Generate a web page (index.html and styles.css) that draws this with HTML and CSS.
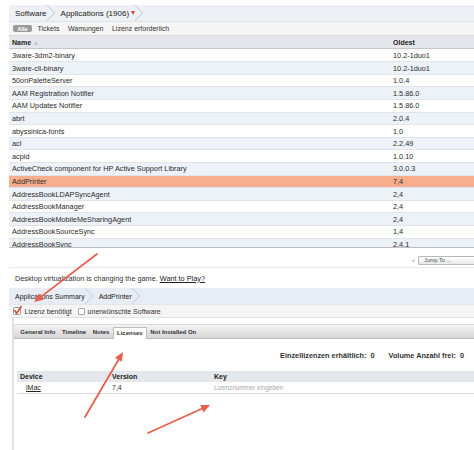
FILE: index.html
```html
<!DOCTYPE html>
<html>
<head>
<meta charset="utf-8">
<title>Applications</title>
<link rel="stylesheet" href="styles.css">
</head>
<body>
<div class="page">
  <div class="crumbs">
    <span class="crumb">Software</span>
    <span class="crumb">Applications (1906)<span class="caret"></span></span>
  </div>
  <div class="filters">
    <span class="pill">Alle</span>
    <span class="filter">Tickets</span>
    <span class="filter">Wamungen</span>
    <span class="filter">Lizenz erforderlich</span>
  </div>
  <div class="grid">
    <div class="ghead"><span>Name<i class="sort"></i></span><span>Oldest</span></div>
    <div class="gbody">
      <div class="row"><span>3ware-3dm2-binary</span><span>10.2-1duo1</span></div>
      <div class="row alt"><span>3ware-cli-binary</span><span>10.2-1duo1</span></div>
      <div class="row"><span>50onPaletteServer</span><span>1.0.4</span></div>
      <div class="row alt"><span>AAM Registration Notifier</span><span>1.5.86.0</span></div>
      <div class="row"><span>AAM Updates Notifier</span><span>1.5.86.0</span></div>
      <div class="row alt"><span>abrt</span><span>2.0.4</span></div>
      <div class="row"><span>abyssinica-fonts</span><span>1.0</span></div>
      <div class="row alt"><span>acl</span><span>2.2.49</span></div>
      <div class="row"><span>acpid</span><span>1.0.10</span></div>
      <div class="row alt"><span>ActiveCheck component for HP Active Support Library</span><span>3.0.0.3</span></div>
      <div class="row sel"><span>AddPrinter</span><span>7,4</span></div>
      <div class="row alt"><span>AddressBookLDAPSyncAgent</span><span>2,4</span></div>
      <div class="row"><span>AddressBookManager</span><span>2,4</span></div>
      <div class="row alt"><span>AddressBookMobileMeSharingAgent</span><span>2,4</span></div>
      <div class="row"><span>AddressBookSourceSync</span><span>1,4</span></div>
      <div class="row alt"><span>AddressBookSync</span><span>2.4.1</span></div>
    </div>
  </div>
  <div class="pager"><span class="laquo">«</span><span class="jump">Jump To ...</span></div>
  <div class="msg">Desktop virtualization is changing the game. <a class="link">Want to Play?</a></div>
  <div class="crumbs sub">
    <span class="crumb">Applications Summary</span>
    <span class="crumb">AddPrinter</span>
  </div>
  <div class="checks">
    <span class="cb on"><svg width="9" height="9" viewBox="0 0 9 9"><rect x="0.5" y="1.5" width="7" height="7" rx="1" fill="#fff" stroke="#9a9a9a"/><path d="M1.8 4.6 L3.6 7.2 L8.2 0.6" fill="none" stroke="#d8432a" stroke-width="1.6" stroke-linecap="round" stroke-linejoin="round"/></svg></span>
    <span class="lbl">Lizenz benötigt</span>
    <span class="cb off"></span>
    <span class="lbl">unerwünschte Software</span>
  </div>
  <div class="panel">
    <div class="tabs">
      <span class="tab">General Info</span>
      <span class="tab">Timeline</span>
      <span class="tab">Notes</span>
      <span class="tab active">Licenses</span>
      <span class="tab">Not Installed On</span>
    </div>
    <div class="stats">
      <span>Einzellizenzen erhältlich:&nbsp; 0</span>
      <span>Volume Anzahl frei:&nbsp; 0</span>
    </div>
    <div class="dtable">
      <div class="dhead"><span>Device</span><span>Version</span><span>Key</span></div>
      <div class="drow"><span><a class="dev">iMac</a></span><span>7,4</span><span class="ph">Lizenznummer eingeben</span></div>
    </div>
  </div>
</div>
<svg class="arrows" width="474" height="450" viewBox="0 0 474 450">
  <g stroke="#e8604d" stroke-width="1.8" stroke-linecap="round" fill="#e8604d">
    <line x1="97" y1="254" x2="41.2" y2="296.6"/>
    <polygon stroke="none" points="34,302 43.6,299.7 38.7,293.4"/>
    <line x1="85" y1="417" x2="118.5" y2="359.8"/>
    <polygon stroke="none" points="123,352 121.9,361.8 115,357.8"/>
    <line x1="148" y1="433" x2="201.8" y2="408.7"/>
    <polygon stroke="none" points="210,405 203.5,412.4 200.2,405.1"/>
  </g>
</svg>
</body>
</html>
```

FILE: styles.css
```css
* { box-sizing: border-box; }
html, body { margin: 0; padding: 0; background: #fff; }
body {
  width: 474px;
  height: 450px;
  overflow: hidden;
  position: relative;
  font-family: "Liberation Sans", Arial, sans-serif;
  color: #2b2b2b;
}
.page { padding: 5px 0 0 9px; }

/* breadcrumbs */
.crumbs {
  display: flex;
  align-items: center;
  height: 17px;
  background: #edf0f5;
  border-bottom: 1px solid #dfe3e8;
  font-size: 8px;
  color: #222;
  overflow: hidden;
}
.crumb {
  position: relative;
  display: flex;
  align-items: center;
  height: 16px;
  padding: 0 8px 0 6px;
}
.crumb::after {
  content: "";
  position: absolute;
  right: 2px;
  top: 2px;
  width: 11px;
  height: 11px;
  border-top: 1px solid #cfd4db;
  border-right: 1px solid #cfd4db;
  transform: rotate(45deg);
}
.caret {
  display: inline-block;
  margin-left: 2px;
  width: 0;
  height: 0;
  border-left: 2.5px solid transparent;
  border-right: 2.5px solid transparent;
  border-top: 4px solid #e0432c;
}
.crumbs.sub {
  height: 17px;
  background: #e8edf5;
  border-bottom: 1px solid #e3e6ea;
  font-size: 7px;
}

/* filters */
.filters {
  display: flex;
  align-items: center;
  gap: 8.5px;
  height: 14px;
  padding-left: 4px;
  background: #f5f5f5;
  border-bottom: 1px solid #dcdcdc;
  font-size: 7px;
  color: #333;
}
.pill {
  display: flex;
  align-items: center;
  justify-content: center;
  width: 19px;
  height: 7px;
  margin-right: -3px;
  border-radius: 2px;
  background: #9b9b9b;
  color: #fff;
  font-weight: bold;
  font-size: 5.5px;
}

/* grid */
.grid { border-bottom: 1px solid #bdbdbd; }
.ghead, .row {
  display: grid;
  grid-template-columns: 1fr 84px;
  align-items: center;
}
.ghead span, .row span { padding-left: 3px; white-space: nowrap; }
.ghead {
  height: 13px;
  background: #e3e6ea;
  border-bottom: 1px solid #c4c7cb;
  font-weight: bold;
  font-size: 7px;
  color: #222;
}
.sort {
  display: inline-block;
  margin-left: 3px;
  width: 0;
  height: 0;
  border-left: 2.5px solid transparent;
  border-right: 2.5px solid transparent;
  border-bottom: 4px solid #c2c2c2;
}
.gbody { height: 198px; overflow: hidden; }
.row {
  height: 12.6px;
  border-bottom: 1px solid #e1e4e9;
  font-size: 7.3px;
  color: #2b2b2b;
}
.row:first-child { height: 13.3px; }
.row.alt { background: #edf2f9; }
.row.sel { background: #f8ae8d; }

/* pager */
.pager {
  display: flex;
  justify-content: flex-end;
  align-items: center;
  height: 20px;
  padding-top: 5px;
  border-bottom: 1px solid #e6e6e6;
}
.laquo { font-size: 6px; color: #999; margin-right: 3px; }
.jump {
  width: 56px;
  height: 9px;
  padding-left: 5px;
  border: 1px solid #b8b8b8;
  border-right: none;
  border-radius: 2px 0 0 2px;
  background: linear-gradient(#ffffff, #e9e9e9);
  font-size: 5.5px;
  line-height: 7px;
  color: #444;
}

/* message */
.msg {
  display: flex;
  align-items: center;
  height: 20px;
  padding-left: 6px;
  font-size: 7.3px;
  color: #333;
}
.link { margin-left: 2px; color: #222; text-decoration: underline; }

/* checks */
.checks {
  display: flex;
  align-items: center;
  height: 13px;
  padding-left: 3.5px;
  background: #f4f4f4;
  border-bottom: 1px solid #e2e2e2;
  font-size: 7px;
  color: #333;
}
.cb.on { display: flex; width: 9px; height: 9px; margin-top: -2px; }
.cb.off {
  width: 7px;
  height: 7px;
  margin-left: 6px;
  border: 1px solid #a8a8a8;
  border-radius: 1px;
  background: #fff;
}
.lbl { margin-left: 3px; }

/* panel */
.panel {
  height: 132px;
  margin-left: 3px;
  padding-top: 6px;
  border-left: 2px solid #e0e0e0;
}
.tabs {
  display: flex;
  align-items: flex-end;
  height: 15px;
  padding-left: 3px;
  background: linear-gradient(#f4f4f4, #d5d5d5);
  border-top: 1px solid #dadada;
  border-bottom: 1px solid #b9b9b9;
}
.tab {
  height: 11px;
  line-height: 11px;
  padding: 0 3.3px;
  font-size: 6px;
  font-weight: bold;
  color: #333;
  white-space: nowrap;
}
.tab.active {
  height: 12px;
  margin-bottom: -1px;
  padding: 0 3.3px;
  background: #fff;
  border: 1px solid #bdbdbd;
  border-bottom: none;
}
.stats {
  display: flex;
  justify-content: flex-end;
  align-items: center;
  gap: 14px;
  height: 14px;
  margin-top: 9px;
  padding-right: 10px;
  font-size: 7.3px;
  font-weight: bold;
  color: #333;
}
.dtable { margin: 9px 0 0 3px; font-size: 7px; }
.dhead, .drow {
  display: grid;
  grid-template-columns: 92px 102px 1fr;
  align-items: center;
}
.dhead span, .drow span { padding-left: 3px; white-space: nowrap; }
.dhead {
  height: 11px;
  background: #e4e7eb;
  font-weight: bold;
  color: #222;
}
.drow {
  height: 12px;
  border-bottom: 1px solid #d9d9d9;
  color: #333;
}
.dev { margin-left: 6px; color: #222; text-decoration: underline; }
.ph { font-size: 6.3px; color: #a9a9a9; }

/* annotation arrows */
.arrows { position: absolute; left: 0; top: 0; pointer-events: none; }
```
